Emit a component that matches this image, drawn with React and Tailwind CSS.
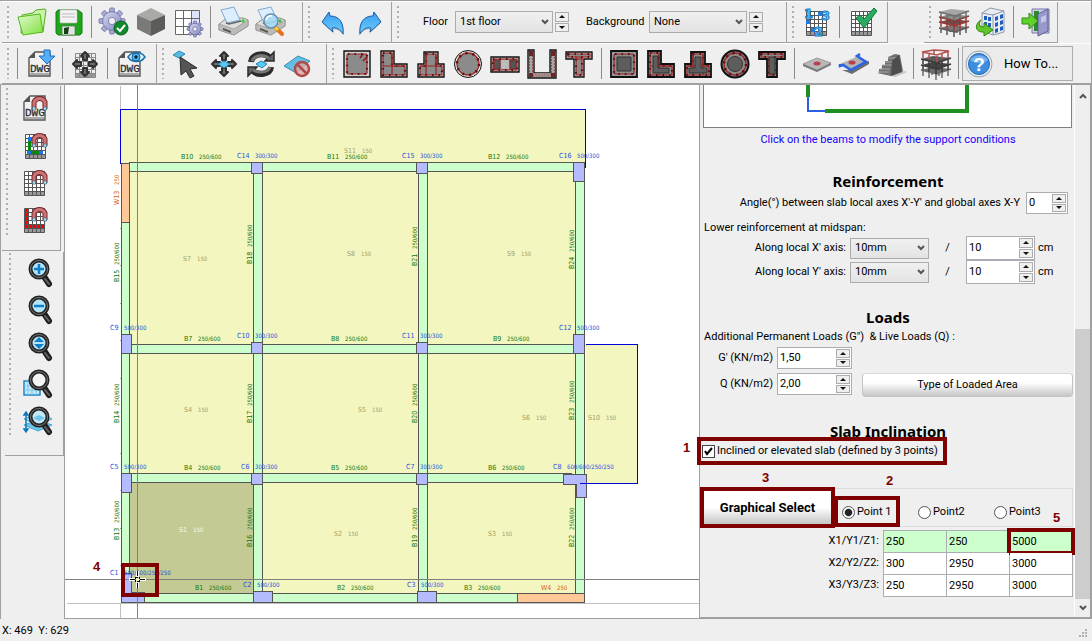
import React, { useState } from "react";

/* ---------- shared icon pieces ---------- */

function Icon({ children }) {
  return (
    <svg viewBox="0 0 32 32" className="size-8 overflow-visible" aria-hidden="true">
      {children}
    </svg>
  );
}

function Gear({ cx, cy, r, id }) {
  const teeth = [0, 45, 90, 135, 180, 225, 270, 315];
  return (
    <g transform={`translate(${cx} ${cy})`}>
      <defs>
        <linearGradient id={id} x1="0" y1="0" x2="1" y2="1">
          <stop offset="0" stopColor="#d6d8f2" />
          <stop offset="1" stopColor="#8587bd" />
        </linearGradient>
      </defs>
      {teeth.map((a) => (
        <rect key={a} x={-r * 0.18} y={-r} width={r * 0.36} height={r * 0.5} rx="1" fill="#a9abd6" stroke="#6b6da5" strokeWidth="0.8" transform={`rotate(${a})`} />
      ))}
      <circle r={r * 0.72} fill={`url(#${id})`} stroke="#6b6da5" strokeWidth="0.8" />
      <circle r={r * 0.28} fill="#efefef" stroke="#6b6da5" strokeWidth="0.8" />
    </g>
  );
}

function Grid({ x = 5, y = 5, n = 5, m = 6, s = 4, line = "#555", fill = "#fff" }) {
  const w = n * s;
  const h = m * s;
  const cols = Array.from({ length: n + 1 }, (_, i) => `M${x + i * s} ${y}v${h}`).join("");
  const rows = Array.from({ length: m + 1 }, (_, i) => `M${x} ${y + i * s}h${w}`).join("");
  return (
    <g>
      <rect x={x} y={y} width={w} height={h} fill={fill} />
      <rect x={x} y={y + h - s} width={w} height={s} fill="#999" />
      <path d={cols + rows} stroke={line} strokeWidth="1" fill="none" transform="translate(.5 .5)" />
    </g>
  );
}

const FolderIcon = () => (
  <Icon>
    <defs>
      <linearGradient id="fold" x1="0" y1="0" x2="1" y2="1">
        <stop offset="0" stopColor="#e2fbd0" />
        <stop offset="1" stopColor="#7fe03c" />
      </linearGradient>
    </defs>
    <path d="M5 27 6 9l11-2 3-3 9-1 1 1-3 22z" fill="#c9f5a6" stroke="#58a821" />
    <path d="M2 11 24 8l3 18-20 3z" fill="url(#fold)" stroke="#58b81e" />
  </Icon>
);

const SaveIcon = () => (
  <Icon>
    <path d="M5 4h20l4 3v20l-2 2H5l-2-2V6z" fill="#22a51c" stroke="#0f7d10" />
    <rect x="7" y="4" width="17" height="13" rx="1" fill="#f3f3f3" stroke="#bbb" strokeWidth=".6" />
    <path d="M9 8h13M9 11h13" stroke="#bbb" />
    <rect x="9" y="20" width="13" height="9" fill="#e3e3e3" stroke="#4b7a4b" strokeWidth=".7" />
    <path d="m11 22 5-1-1 7h-4z" fill="#173f17" />
  </Icon>
);

const GearCheckIcon = () => (
  <Icon>
    <Gear cx={14} cy={15} r={13} id="g1" />
    <circle cx="23" cy="22" r="7" fill="#10892f" stroke="#0a6321" />
    <path d="m19 22 3 3 5-6" fill="none" stroke="#fff" strokeWidth="2" />
  </Icon>
);

const CubeIcon = () => (
  <Icon>
    <path d="M16 2 30 9 16 15 2 9z" fill="#a9a9a7" />
    <path d="M2 9l14 6v15L2 23z" fill="#7a7a78" />
    <path d="M30 9 16 15v15l14-7z" fill="#5c5c5a" />
  </Icon>
);

const GridGearIcon = () => (
  <Icon>
    <rect x="3" y="4" width="24" height="24" fill="#fff" />
    <path d="M20 5h7v7h-7zM20 13h7v7h-7z" fill="#dfe2fb" />
    <path d="M3.500 4.500h24v24h-24zM11.500 4v24M19.500 4v24M3 12.500h24M3 20.500h24" fill="none" stroke="#666" />
    <Gear cx={23} cy={23} r={8} id="g2" />
  </Icon>
);

function PrinterBody() {
  return (
    <g>
      <path d="m2 18 8-6h16l5 2v6l-14 9-15-5z" fill="#dededc" stroke="#8d8d8b" />
      <path d="m4 4 13-3 6 13-13 3z" fill="#dceefd" stroke="#7eaad0" />
      <path d="M9 17l3 1 12-3" stroke="#666" strokeWidth="1.500" fill="none" />
      <path d="m2 18 15 5 14-9v6l-14 9-15-5z" fill="#bcbcba" stroke="#8d8d8b" strokeWidth=".6" />
      <path d="m6 22 8 3v2l-8-3z" fill="#555" />
      <circle cx="26" cy="15" r="1.7" fill="#33c933" />
    </g>
  );
}

const PrinterIcon = () => (
  <Icon>
    <PrinterBody />
  </Icon>
);

const PreviewIcon = () => (
  <Icon>
    <PrinterBody />
    <path d="m22 22 6 6" stroke="#e8711c" strokeWidth="4" strokeLinecap="round" />
    <path d="m21 21 3 3" stroke="#f7d33e" strokeWidth="3" />
    <circle cx="17" cy="15" r="7" fill="#a5d9f7" fillOpacity=".9" stroke="#6b8ea8" strokeWidth="1.5" />
    <path d="M12 14a5 5 0 0 1 6-4" stroke="#fff" strokeWidth="1.5" fill="none" />
  </Icon>
);

function BackArrow({ id }) {
  return (
    <g>
      <defs>
        <linearGradient id={id} x1="0" y1="0" x2="0" y2="1">
          <stop offset="0" stopColor="#3a9df0" />
          <stop offset="1" stopColor="#6bd0ff" />
        </linearGradient>
      </defs>
      <path d="M26 29c-3-5-7-7-11-6l1 4L5 17 12 7l1 4c9 0 14 6 13 18z" fill="#777" opacity=".35" transform="translate(1 1)" />
      <path d="M26 28c-3-5-7-7-11-6l1 4L5 16 12 6l1 4c9 0 14 6 13 18z" fill={`url(#${id})`} stroke="#1b5ea8" />
    </g>
  );
}

const UndoIcon = () => (
  <Icon>
    <BackArrow id="ua" />
  </Icon>
);

const RedoIcon = () => (
  <Icon>
    <g transform="matrix(-1 0 0 1 32 0)">
      <BackArrow id="ra" />
    </g>
  </Icon>
);

const NumberGridIcon = () => (
  <Icon>
    <Grid x={5} y={5} />
    <path d="M17 6h4v4h-4zM5 14h4v4H5zM10 22h4v4h-4z" fill="#1e7de0" />
    <g fontFamily="DejaVu Sans" fontWeight="bold" fontSize="13" fill="#6cc6f8" stroke="#1578c8" strokeWidth=".9">
      <text x="3" y="12">1</text>
      <text x="20" y="14">3</text>
      <text x="13" y="30">2</text>
    </g>
  </Icon>
);

const GridCheckIcon = () => (
  <Icon>
    <Grid x={5} y={5} />
    <path d="m10 12 4-3 4 4L28 2l3 3-13 17z" fill="#2bab62" stroke="#137a3d" />
  </Icon>
);

/* One storey of the concrete frame: columns under a thin slab plate */
function Storey({ y, fill, edge, legs = 5 }) {
  return (
    <g>
      <path d={`M3 ${y}v${legs}M9 ${y + 2}v${legs}M16 ${y + 4}v${legs}M22 ${y + 2}v${legs}M28 ${y}v${legs}M12 ${y - 1}v${legs}M19 ${y}v${legs}`} stroke={edge} strokeWidth="1.500" />
      <path d={`M1 ${y}l12-3 18 2-14 5z`} fill={fill} />
      <path d={`M1 ${y}l16 4 14-5`} fill="none" stroke={edge} strokeWidth="1.500" />
    </g>
  );
}

const BuildingRedIcon = () => (
  <Icon>
    <Storey y={22} fill="#777" edge="#5a5a5a" />
    <Storey y={16} fill="#6d4c4c" edge="#a13c3a" />
    <Storey y={11} fill="#8b8b8b" edge="#903634" />
    <Storey y={6} fill="#a5a5a5" edge="#6f6f6f" />
  </Icon>
);

const BuildingBlueIcon = () => (
  <Icon>
    <path d="m7 7 8-5 14 3v21l-11 3-11-4z" fill="#e7edf3" stroke="#8e99a5" />
    <path d="M18 8v21M7 7l11 2 11-4" stroke="#8e99a5" fill="none" />
    <path d="M9 10h3v4H9zM13 11h3v4h-3zM9 16h3v4H9zM13 17h3v4h-3zM20 11l3-1v4l-3 1zM25 9l3-1v4l-3 1zM20 17l3-1v4l-3 1zM25 15l3-1v4l-3 1zM20 23l3-1v4l-3 1zM25 21l3-1v4l-3 1z" fill="#1f5fc0" />
    <path d="M6 14c-3 4-2 7 3 7v-4l9 7-9 6v-4C0 27-1 18 6 14z" fill="#62c72c" stroke="#2f8410" />
  </Icon>
);

const ExitIcon = () => (
  <Icon>
    <path d="M12 3h17v24H12z" fill="#cfcfe4" stroke="#7577a8" />
    <path d="M14 5h5v20h-5z" fill="#2c8a2c" />
    <path d="m18 8 10-5v22l-10 5z" fill="#9899cc" stroke="#5f6196" />
    <path d="m21 11 5-2v6l-5 2z" fill="#c5c6ea" />
    <path d="M2 12h7V7l9 8-9 8v-5H2z" fill="#5fd32c" stroke="#2f8a12" />
  </Icon>
);

function DwgPage() {
  return (
    <g>
      <path d="M5 10l6-6h15v24H5z" fill="#f1f1f1" stroke="#555" strokeWidth="1.4" />
      <path d="m5 10 6-6v6z" fill="#555" />
      <path d="M6 25h19v2H6z" fill="#aaa" />
      <text x="6" y="24" fontFamily="Liberation Mono" fontSize="11" fill="#2d2d2d" stroke="#2d2d2d" strokeWidth=".3">DWG</text>
    </g>
  );
}

const DwgImportIcon = () => (
  <Icon>
    <DwgPage />
    <path d="M20 2h6v6h5l-8 8-8-8h5z" fill="#55aef7" stroke="#1f6fc2" />
  </Icon>
);

const DwgViewIcon = () => (
  <Icon>
    <DwgPage />
    <path d="M14 9c4-6 13-6 17 0-4 6-13 6-17 0z" fill="#d9efff" stroke="#1c6fa8" strokeWidth="1.5" />
    <circle cx="22" cy="9" r="4" fill="#4ab3ee" stroke="#1c5f94" />
    <circle cx="22" cy="9" r="1.7" fill="#123" />
  </Icon>
);

const DARK_ARROWS = "M16 4l4 4h-2v4h-4V8h-2zM16 28l4-4h-2v-4h-4v4h-2zM4 16l4-4v2h4v4H8v2zM28 16l-4-4v2h-4v4h4v2z";

const GridMoveIcon = () => (
  <Icon>
    <Grid x={6} y={5} fill="#eee" line="#888" />
    <path d={DARK_ARROWS} fill="#6c6c6c" stroke="#333" strokeWidth="2" strokeLinejoin="round" />
  </Icon>
);

const SelectIcon = () => (
  <Icon>
    <path d="m2 7 6-4 6 3-6 4z" fill="#58bbe0" stroke="#2c87b0" />
    <path d="M9 9 26 20l-7 1 4 7-4 2-4-7-5 4z" fill="#555" stroke="#2b2b2b" strokeLinejoin="round" />
  </Icon>
);

const MoveIcon = () => (
  <Icon>
    <path d={DARK_ARROWS} fill="#6c6c6c" stroke="#303030" strokeWidth="2" strokeLinejoin="round" />
    <path d="m10 16 6-3 6 3-6 4z" fill="#5cc8f5" stroke="#2387b5" />
  </Icon>
);

const RotateIcon = () => (
  <Icon>
    <path d="M6 14C7 6 19 4 24 9" fill="none" stroke="#2b2b2b" strokeWidth="6" />
    <path d="m20 13 9 0V4z" fill="#666" stroke="#2b2b2b" strokeWidth="1.500" />
    <path d="M7 13C9 7 18 6 24 10" fill="none" stroke="#777" strokeWidth="3" />
    <path d="M26 19c-1 8-13 9-18 4" fill="none" stroke="#2b2b2b" strokeWidth="6" />
    <path d="m12 19-9 0v9z" fill="#666" stroke="#2b2b2b" strokeWidth="1.500" />
    <path d="M25 19c-2 6-12 6-17 3" fill="none" stroke="#777" strokeWidth="3" />
    <path d="m11 16 5-3 6 3-5 4z" fill="#5cc8f5" stroke="#2387b5" />
  </Icon>
);

const DeleteSlabIcon = () => (
  <Icon>
    <path d="M2 18 16 8l12 5-14 12z" fill="#62bfe3" stroke="#3a8db0" />
    <circle cx="20" cy="21" r="7" fill="#d9a9a6" fillOpacity=".8" stroke="#b04a49" strokeWidth="2.5" />
    <path d="m15 16 10 10" stroke="#b04a49" strokeWidth="2.5" />
  </Icon>
);

/* ---------- concrete section icons ---------- */

const SECTION_SHAPES = {
  square: "M3 3h26v26H3z",
  ell: "M3 3h13v13h13v13H3z",
  tee: "M9 4h14v12h6v13H3V16h6z",
  flat: "M2 9h28v15H2z",
  channel: "M2 2h6v23h16V2h6v28H2z",
  beamT: "M3 4h26v7h-8v18H11V11H3z",
};
const STEEL = {
  square: "M7 6h18l1 1v18l-1 1H7l-1-1V7z",
  ell: "M5 5h9v13h13v9H5z",
  tee: "M11 6h10v12h6v9H5v-9h6z",
  flat: "M4 11h24v11H4z",
  beamT: "M5 6h22v3h-8v18h-6V9H5z",
};

function SectionIcon({ shape, jacket = false }) {
  if (shape === "round") {
    return (
      <Icon>
        <circle cx="16" cy="16" r="13.5" fill={jacket ? "#8a8a8a" : "#e4e4e4"} stroke="#111" strokeWidth={jacket ? 2 : 1} />
        <circle cx="16" cy="16" r="11" fill="#8b8b8b" stroke="#9b2a2a" strokeWidth="1.3" />
        <circle cx="16" cy="16" r="11" fill="none" stroke="#5f0d0d" strokeWidth="2.500" strokeDasharray="2 5" />
        {jacket && <circle cx="16" cy="16" r="7.500" fill="#5d5d5d" stroke="#333" />}
      </Icon>
    );
  }
  return (
    <Icon>
      <path d={SECTION_SHAPES[shape]} fill={jacket ? "#999" : "#d0d0d0"} stroke="#111" strokeWidth={jacket ? 1.8 : 1.4} />
      {shape === "channel" ? (
        <g>
          <path d="M5 4v23h22V4" fill="none" stroke="#a5a5a5" strokeWidth="4" />
          <path d="M3.500 4v24h25V4M6.500 4v22h19V4" fill="none" stroke="#9a3a3a" strokeWidth=".8" strokeDasharray="2 1" />
          <path d="M3 3h4v5H3zM25 3h4v5h-4zM3 25h4v4H3zM25 25h4v4h-4z" fill="#6a2424" />
        </g>
      ) : (
        <g>
          <path d={STEEL[shape]} fill="#8b8b8b" stroke="#9b2222" strokeWidth="1.2" />
          <path d={STEEL[shape]} fill="none" stroke="#5f0d0d" strokeWidth="2.200" strokeDasharray="1.500 5" />
        </g>
      )}
      {shape === "square" && !jacket && <path d="m19 10 3-4M22 13l4-4" stroke="#8e1515" strokeWidth="1.5" />}
      {shape === "ell" && <path d="M5 18h22M14 5v22" stroke="#9b2222" strokeWidth="1.2" />}
      {shape === "tee" && <path d="M5 18h22M11 6v21M21 6v21" stroke="#9b2222" strokeWidth="1.2" />}
      {shape === "flat" && <path d="M5 12h6v9H5zM21 12h6v9h-6z" fill="#555" stroke="#8a2222" />}
      {shape === "flat" && <path d="M12 12h8v9h-8z" fill="#bbb" />}
      {shape === "beamT" && !jacket && <path d="M12 9h8M12 11h8" stroke="#9b1c1c" />}
      {jacket && shape === "square" && <path d="M9 9h14v14H9z" fill="#5d5d5d" stroke="#333" />}
      {jacket && shape === "ell" && <path d="M8 8h5v12h11v5H8z" fill="#5d5d5d" stroke="#333" />}
      {jacket && shape === "tee" && <path d="M13 9h6v11h6v5H7v-5h6z" fill="#5d5d5d" stroke="#333" />}
      {jacket && shape === "beamT" && <path d="M13 9h6v17h-6z" fill="#5d5d5d" stroke="#333" />}
    </Icon>
  );
}

const SlabIcon = () => (
  <Icon>
    <path d="m2 16 14-6 14 5-14 7z" fill="#b8b8b8" stroke="#9a9a9a" />
    <path d="m2 16 14 6 14-7v2l-14 7-14-6z" fill="#777" />
    <ellipse cx="16" cy="15.500" rx="3.500" ry="2" fill="#b8414f" />
  </Icon>
);

const SlabBlueIcon = () => (
  <Icon>
    <path d="m4 22 10 4 17-10v-3L14 22z" fill="#6d6d6d" />
    <path d="m2 16 16-7 12 4-16 9z" fill="#b3b3b3" />
    <ellipse cx="14" cy="14.500" rx="3.500" ry="2" fill="#b8414f" />
    <path d="M2 16v2l3-1 8 5 15-8-9-6 3-2" fill="none" stroke="#2d63e6" strokeWidth="2.600" />
  </Icon>
);

const StairsIcon = () => (
  <Icon>
    <path d="m13 27 16-4 3 1-12 5z" fill="#c2c2c2" />
    <path d="M2 25h2v-4h3v-4h3v-4h3V9l7-3 5 1 3 16-12 5z" fill="#6f6f6f" />
    <path d="M3 24h11M5 21h10M8 17h9M10 14h9M13 10h9" stroke="#aaa" />
    <path d="m17 13 7-6 3 17-11 4z" fill="#4d4d4d" />
  </Icon>
);

const TowerIcon = () => (
  <Icon>
    <Storey y={22} fill="#6c6c6c" edge="#6c6c6c" legs={6} />
    <Storey y={17} fill="#454545" edge="#3a3a3a" />
    <Storey y={11} fill="#5a5a5a" edge="#3a3a3a" />
    <g fill="none" strokeWidth="1.500" stroke="#b0524e">
      <path d="M2 4 14 2l15 1-12 4zM3 5v5M9 6v5M17 8v6M28 4v6M22 6v5M14 2v5" />
    </g>
  </Icon>
);

/* ---------- snap and zoom icons ---------- */

function Magnet() {
  return (
    <g>
      <path d="M15 17V10a6 6 0 0 1 11 0v7" fill="none" stroke="#7d2425" strokeWidth="5" />
      <path d="M15 17V10a6 6 0 0 1 11 0v7" fill="none" stroke="#c97476" strokeWidth="3" />
      <path d="M13.500 15h3v3h-3zM24.500 15h3v3h-3z" fill="#b5def0" stroke="#4c6f80" strokeWidth=".8" />
    </g>
  );
}

const SnapDwgIcon = () => (
  <Icon>
    <DwgPage />
    <Magnet />
  </Icon>
);

const SnapBeamIcon = () => (
  <Icon>
    <Grid x={6} y={5} />
    <path d="M9 8h3v17H9zM9 22h15v3H9z" fill="#0a860a" />
    <path d="M9 8h4v4H9zM8 22h4v3H8zM20 22h4v3h-4z" fill="#1976f0" />
    <Magnet />
  </Icon>
);

const SnapGridIcon = () => (
  <Icon>
    <Grid x={5} y={5} />
    <Magnet />
  </Icon>
);

const SnapLineIcon = () => (
  <Icon>
    <Grid x={5} y={5} />
    <path d="M6 6h3v3H6zM6 10h3v3H6zM6 14h3v3H6zM6 18h3v3H6zM6 22h3v3H6zM10 22h3v3h-3zM14 22h3v3h-3zM18 22h3v3h-3zM22 22h3v3h-3z" fill="#f00" />
    <Magnet />
  </Icon>
);

function Lens({ fill = "#b5e3f7" }) {
  return (
    <g>
      <path d="m22 21 4 6" stroke="#1f1f1f" strokeWidth="6" strokeLinecap="round" />
      <path d="m22 22 4 5" stroke="#666" strokeWidth="2" strokeLinecap="round" />
      <circle cx="16" cy="12" r="8.500" fill={fill} stroke="#222" strokeWidth="4" />
      <circle cx="16" cy="12" r="8.500" fill="none" stroke="#777" strokeWidth="1" />
    </g>
  );
}

const ZoomInIcon = () => (
  <Icon>
    <Lens />
    <path d="M16 7v10M11 12h10" stroke="#0f80c8" strokeWidth="2.500" />
  </Icon>
);

const ZoomOutIcon = () => (
  <Icon>
    <Lens />
    <path d="M11 12h10" stroke="#0f80c8" strokeWidth="2.500" />
  </Icon>
);

const ZoomFitIcon = () => (
  <Icon>
    <Lens />
    <path d="m16 6 5 5H11zM16 18l5-5H11z" fill="#0f80c8" />
  </Icon>
);

const ZoomWindowIcon = () => (
  <Icon>
    <path d="M1 13h16v14H1z" fill="#c5e9fa" stroke="#1b87c9" strokeWidth="1.500" />
    <path d="M5 13v14M9 13v14M13 13v14M1 18h16M1 22h16" stroke="#7cc4e8" />
    <Lens fill="#f4f4f4" />
  </Icon>
);

const ZoomStoreyIcon = () => (
  <Icon>
    <path d="m1 14 14-6 14 6-14 6z" fill="#a5dcf3" stroke="#49a8d4" />
    <path d="m1 20 14-5 14 5-14 6z" fill="#6fc4ea" stroke="#49a8d4" />
    <path d="M3 8v18M1 10l2-3 2 3zM1 24l2 3 2-3z" stroke="#0f78bf" strokeWidth="1.500" fill="#0f78bf" />
    <Lens fill="#c3e9f8" />
    <path d="m10 13 6-3 6 3-6 3z" fill="#6fc4ea" />
  </Icon>
);

/* ---------- small controls ---------- */

function Tool({ label, children }) {
  return (
    <button type="button" aria-label={label} className="flex h-10 w-[37px] shrink-0 items-center justify-center">
      {children}
    </button>
  );
}

function Sep() {
  return (
    <div className="flex w-2 shrink-0 justify-center py-1">
      <div className="w-px bg-[#8c8c8c]" />
    </div>
  );
}

function Grip({ vertical = false }) {
  return vertical ? (
    <div className="w-[2px] self-stretch bg-[repeating-linear-gradient(to_bottom,#b0b0b0_0_2px,transparent_2px_5px)]" />
  ) : (
    <div className="flex w-[11px] shrink-0 justify-center py-1">
      <div className="w-[2px] bg-[repeating-linear-gradient(to_bottom,#b0b0b0_0_2px,transparent_2px_5px)]" />
    </div>
  );
}

function ToolGroup({ className = "", children }) {
  return (
    <div className={`flex shrink-0 items-stretch border-r border-b border-[#a0a0a0] ${className}`}>
      <Grip />
      {children}
    </div>
  );
}

function Chevron() {
  return (
    <svg viewBox="0 0 8 6" className="pointer-events-none absolute top-1/2 right-1 h-[6px] w-2 -translate-y-1/2" aria-hidden="true">
      <path d="M1 1l3 3 3-3" fill="none" stroke="#555" strokeWidth="2" />
    </svg>
  );
}

function Dropdown({ label, options, className }) {
  return (
    <div className={`relative shrink-0 ${className}`}>
      <select aria-label={label} className="block h-full w-full appearance-none border border-[#acacac] bg-linear-to-b from-[#f0f0f0] to-[#e3e3e3] pl-1 outline-none">
        {options.map((o) => (
          <option key={o}>{o}</option>
        ))}
      </select>
      <Chevron />
    </div>
  );
}

function SpinButtons({ label, onStep }) {
  return (
    <div className="flex w-[14px] shrink-0 flex-col gap-px">
      {[1, -1].map((step) => (
        <button
          key={step}
          type="button"
          aria-label={`${step > 0 ? "Increase" : "Decrease"} ${label}`}
          onClick={() => onStep && onStep(step)}
          className="flex min-h-0 flex-1 items-center justify-center border border-[#acacac] bg-[#efefef]"
        >
          <svg viewBox="0 0 6 3" className="h-[3px] w-[6px]" aria-hidden="true">
            <path d={step > 0 ? "M0 3 3 0l3 3z" : "M0 0h6L3 3z"} fill="#111" />
          </svg>
        </button>
      ))}
    </div>
  );
}

function Spin({ id, label, initial, decimals = 0, className }) {
  const [value, setValue] = useState(initial);
  const step = (d) => {
    const n = parseFloat(value.replace(",", ".")) || 0;
    setValue((n + d).toFixed(decimals).replace(".", ","));
  };
  return (
    <div className={`flex shrink-0 border border-[#abadb3] bg-white p-px ${className}`}>
      <input id={id} aria-label={label} value={value} onChange={(e) => setValue(e.target.value)} className="w-0 min-w-0 flex-1 bg-transparent pl-px outline-none" />
      <SpinButtons label={label} onStep={step} />
    </div>
  );
}

/* ---------- header ---------- */

const FLOORS = ["1st floor", "2nd floor", "3rd floor"];

function Header() {
  return (
    <header className="border-t border-r border-[#a0a0a0] bg-[#efefef] pl-[2px]">
      <div className="flex h-[42px] border-t border-white">
        <ToolGroup className="pr-[14px]">
          <Tool label="Open"><FolderIcon /></Tool>
          <Tool label="Save"><SaveIcon /></Tool>
          <Sep />
          <Tool label="Parameters"><GearCheckIcon /></Tool>
          <Tool label="Materials"><CubeIcon /></Tool>
          <Tool label="Grid settings"><GridGearIcon /></Tool>
          <Sep />
          <Tool label="Print"><PrinterIcon /></Tool>
          <Tool label="Print preview"><PreviewIcon /></Tool>
        </ToolGroup>
        <ToolGroup className="pr-[3px]">
          <Tool label="Undo"><UndoIcon /></Tool>
          <Tool label="Redo"><RedoIcon /></Tool>
        </ToolGroup>
        <ToolGroup className="pr-[23px]">
          <div className="flex items-center pl-5">
            <span className="w-8">Floor</span>
            <Dropdown label="Floor" options={FLOORS} className="mr-[2px] h-[22px] w-[98px]" />
            <div className="flex h-5"><SpinButtons label="floor" /></div>
            <span className="ml-[17px] w-[63px] shrink-0">Background</span>
            <Dropdown label="Background" options={["None", ...FLOORS]} className="mr-[2px] h-[22px] w-[98px]" />
            <div className="flex h-5"><SpinButtons label="background" /></div>
          </div>
        </ToolGroup>
        <ToolGroup className="mr-9 pr-[7px]">
          <Tool label="Renumber"><NumberGridIcon /></Tool>
          <Sep />
          <Tool label="Check"><GridCheckIcon /></Tool>
        </ToolGroup>
        <ToolGroup className="pr-[3px]">
          <Tool label="3D frame"><BuildingRedIcon /></Tool>
          <Tool label="Model"><BuildingBlueIcon /></Tool>
          <Sep />
          <Tool label="Exit"><ExitIcon /></Tool>
        </ToolGroup>
      </div>
      <div className="flex h-[41px] border-t border-white">
        <ToolGroup className="pr-2">
          <Sep />
          <Tool label="Import DWG"><DwgImportIcon /></Tool>
          <Sep />
          <Tool label="Move grid"><GridMoveIcon /></Tool>
          <Sep />
          <Tool label="View DWG"><DwgViewIcon /></Tool>
        </ToolGroup>
        <ToolGroup className="pr-[10px]">
          <Tool label="Select"><SelectIcon /></Tool>
          <Tool label="Move"><MoveIcon /></Tool>
          <Tool label="Rotate"><RotateIcon /></Tool>
          <Tool label="Delete"><DeleteSlabIcon /></Tool>
        </ToolGroup>
        <div className="flex min-w-0 flex-1 border-b border-[#a0a0a0]">
          <Grip />
          <Tool label="Rectangular column"><SectionIcon shape="square" /></Tool>
          <Tool label="L column"><SectionIcon shape="ell" /></Tool>
          <Tool label="T column"><SectionIcon shape="tee" /></Tool>
          <Tool label="Circular column"><SectionIcon shape="round" /></Tool>
          <Tool label="Wall"><SectionIcon shape="flat" /></Tool>
          <Tool label="Core wall"><SectionIcon shape="channel" /></Tool>
          <Tool label="Beam"><SectionIcon shape="beamT" /></Tool>
          <Sep />
          <Tool label="Jacketed column"><SectionIcon shape="square" jacket /></Tool>
          <Tool label="Jacketed L column"><SectionIcon shape="ell" jacket /></Tool>
          <Tool label="Jacketed T column"><SectionIcon shape="tee" jacket /></Tool>
          <Tool label="Jacketed circular column"><SectionIcon shape="round" jacket /></Tool>
          <Tool label="Jacketed beam"><SectionIcon shape="beamT" jacket /></Tool>
          <Sep />
          <Tool label="Slab"><SlabIcon /></Tool>
          <Tool label="Foundation slab"><SlabBlueIcon /></Tool>
          <Tool label="Stairs"><StairsIcon /></Tool>
          <Sep />
          <Tool label="Structure"><TowerIcon /></Tool>
          <Sep />
          <button type="button" className="my-[2px] flex w-[111px] shrink-0 items-center border border-[#adadad] bg-[#ebebeb] pl-[2px] text-[13px]">
            <svg viewBox="0 0 28 28" className="mr-[11px] size-7" aria-hidden="true">
              <circle cx="14" cy="14" r="13" fill="#e6eaee" stroke="#9aa3ab" />
              <circle cx="14" cy="14" r="10.500" fill="#3b8ee0" stroke="#2767b0" />
              <path d="M5 10a10 8 0 0 1 18 0c-5 4-13 4-18 0z" fill="#8cc2f5" opacity=".7" />
              <text x="14" y="21" textAnchor="middle" fontFamily="Liberation Sans" fontSize="19" fontWeight="bold" fill="#fff">?</text>
            </svg>
            How To...
          </button>
        </div>
      </div>
    </header>
  );
}

/* ---------- left bars ---------- */

function Sidebar() {
  return (
    <aside className="flex w-[65px] shrink-0 flex-col border-t border-r border-l border-[#a0a0a0] bg-[#efefef]">
      <div className="mt-px mr-[3px] ml-px flex border-r border-b border-[#a0a0a0] pt-[2px] pb-[15px] pl-1">
        <Grip vertical />
        <div className="flex flex-col gap-[5px] pl-[11px]">
          {[
            ["Snap to DWG", SnapDwgIcon],
            ["Snap to beams", SnapBeamIcon],
            ["Snap to grid", SnapGridIcon],
            ["Snap to lines", SnapLineIcon],
          ].map(([label, I]) => (
            <button key={label} type="button" aria-label={label} className="h-8 w-8 first:mt-1"><I /></button>
          ))}
        </div>
      </div>
      <div className="mt-px ml-1 flex border-r border-b border-[#a0a0a0] pt-px pb-[18px] pl-1">
        <Grip vertical />
        <div className="flex flex-col gap-[5px] pl-[12px]">
          {[
            ["Zoom in", ZoomInIcon],
            ["Zoom out", ZoomOutIcon],
            ["Zoom extents", ZoomFitIcon],
            ["Zoom window", ZoomWindowIcon],
            ["Zoom storey", ZoomStoreyIcon],
          ].map(([label, I]) => (
            <button key={label} type="button" aria-label={label} className="h-8 w-8 first:mt-1"><I /></button>
          ))}
        </div>
      </div>
    </aside>
  );
}

/* ---------- floor plan ---------- */

const BEAMS = [
  [129, 162, 450, 9], [129, 344, 450, 9], [121, 473, 450, 9], [121, 593, 396, 9],
];
const BEAMS_V = [
  [121, 222, 8, 380], [253, 162, 9, 440], [418, 162, 9, 440], [575, 162, 9, 440],
];
const COLUMNS = [
  [251, 162, 11, 11], [416, 162, 11, 11], [573, 162, 11, 19],
  [121, 334, 10, 19], [251, 342, 11, 11], [416, 342, 11, 11], [573, 334, 11, 19],
  [121, 473, 10, 19], [251, 473, 11, 11], [416, 473, 11, 11],
  [253, 591, 19, 11], [417, 591, 19, 11],
];
/* kind, name, x, baseline, size text, size x */
const LABELS = [
  ["b", "B10", 181, 159, "250/600", 199], ["c", "C14", 237, 158, "300/300", 255],
  ["s", "S11", 344, 153, "150", 362], ["b", "B11", 327, 159, "250/600", 345],
  ["c", "C15", 402, 158, "300/300", 420], ["b", "B12", 488, 159, "250/600", 506],
  ["c", "C16", 559, 158, "500/300", 577],
  ["s", "S7", 183, 261, "150", 197], ["s", "S8", 347, 256, "150", 361], ["s", "S9", 507, 256, "150", 521],
  ["c", "C9", 110, 330, "500/300", 124], ["b", "B7", 184, 341, "250/600", 198],
  ["c", "C10", 237, 338, "300/300", 255], ["b", "B8", 331, 341, "250/600", 345],
  ["c", "C11", 402, 338, "300/300", 420], ["b", "B9", 493, 341, "250/600", 507],
  ["c", "C12", 559, 330, "500/300", 577],
  ["s", "S4", 184, 412, "150", 198], ["s", "S5", 358, 412, "150", 372],
  ["s", "S6", 522, 420, "150", 536], ["s", "S10", 588, 420, "150", 606],
  ["c", "C5", 110, 469, "500/300", 124], ["b", "B4", 184, 470, "250/600", 198],
  ["c", "C6", 241, 469, "300/300", 255], ["b", "B5", 331, 470, "250/600", 345],
  ["c", "C7", 406, 469, "300/300", 420], ["b", "B6", 488, 470, "250/600", 502],
  ["c", "C8", 553, 469, "600/600/250/250", 567],
  ["x", "S1", 179, 532, "150", 193], ["s", "S2", 334, 536, "150", 348], ["s", "S3", 488, 536, "150", 502],
  ["c", "C1", 110, 575, "500/600/250/250", 124],
  ["b", "B1", 195, 590, "250/600", 209], ["c", "C2", 243, 587, "500/300", 257],
  ["b", "B2", 337, 590, "250/600", 351], ["c", "C3", 407, 587, "500/300", 421],
  ["b", "B3", 464, 590, "250/600", 478], ["w", "W4", 541, 590, "250", 557],
];
/* kind, name, baseline x, start y, size text, size start y */
const LABELS_V = [
  ["w", "W13", 119, 205, "250", 185],
  ["b", "B15", 119, 282, "250/600", 265], ["b", "B18", 252, 264, "250/600", 247],
  ["b", "B21", 417, 266, "250/600", 249], ["b", "B24", 574, 269, "250/600", 252],
  ["b", "B14", 119, 423, "250/600", 406], ["b", "B17", 252, 423, "250/600", 406],
  ["b", "B20", 417, 423, "250/600", 406], ["b", "B23", 574, 420, "250/600", 403],
  ["b", "B13", 119, 540, "250/600", 523], ["b", "B16", 252, 547, "250/600", 530],
  ["b", "B19", 417, 547, "250/600", 530], ["b", "B22", 574, 547, "250/600", 530],
];
const INK = { b: "#0f7a0f", c: "#1c50e0", s: "#a0a068", w: "#d95f14", x: "#fbfbe6" };

function Plan() {
  return (
    <section aria-label="Floor plan" className="flex min-w-0 flex-1 overflow-hidden border-t border-b border-[#a0a0a0] bg-white">
      <svg className="min-h-[533px] w-0 flex-1" role="img" aria-label="First floor plan">
        <g transform="translate(-65 -85)">
          <g shapeRendering="crispEdges">
            <g transform="translate(.5 .5)">
              <path d="M120 85v24M120 603v60M66 603h4000" stroke="#c0c0c0" fill="none" />
              <path d="M120 163v-54h465v54z" fill="#f4f6bf" />
              <path d="M585 344h52v139h-52z" fill="#f4f6bf" />
              <path d="M129 163h450v436H129z" fill="#f4f6bf" />
              <path d="M129 482h124v111H129z" fill="#c4ca93" />
              {[228, 265, 303, 340, 378, 453, 490, 528, 565].map((y) => (
                <path key={y} d={`M119 ${y}h2`} stroke="#aaa" />
              ))}
              <g fill="#ccffcc" stroke="#555">
                {BEAMS_V.map((r) => (
                  <rect key={r.join()} x={r[0]} y={r[1]} width={r[2]} height={r[3]} />
                ))}
                {BEAMS.map((r) => (
                  <rect key={r.join()} x={r[0]} y={r[1]} width={r[2]} height={r[3]} />
                ))}
              </g>
              <g fill="#ffc896" stroke="#555">
                <rect x="121" y="163" width="8" height="59" />
                <rect x="517" y="593" width="67" height="9" />
              </g>
              <g fill="#b4bbff" stroke="#555">
                {COLUMNS.map((r) => (
                  <rect key={r.join()} x={r[0]} y={r[1]} width={r[2]} height={r[3]} />
                ))}
                <path d="M563 474h23v23h-10v-13h-13z" />
                <path d="M121 573h10v19h13v10h-23z" />
              </g>
              <path d="M120 163v-54h465v58M585 344h52v139h-58" fill="none" stroke="#0000d8" />
            </g>
          </g>
          <g fontFamily="'DejaVu Sans Condensed', 'DejaVu Sans', sans-serif">
            {LABELS.map(([k, name, x, y, size, sx]) => (
              <g key={name} fill={INK[k]}>
                <text x={x} y={y} fontSize="7">{name}</text>
                <text x={sx} y={y} fontSize="6">{size}</text>
              </g>
            ))}
            {LABELS_V.map(([k, name, x, y, size, sy]) => (
              <g key={name} fill={INK[k]}>
                <text transform={`translate(${x} ${y}) rotate(-90)`} fontSize="7">{name}</text>
                <text transform={`translate(${x} ${sy}) rotate(-90)`} fontSize="6">{size}</text>
              </g>
            ))}
          </g>
          <g shapeRendering="crispEdges">
            <path d="M137.500 85v4000M60 579.500h4000" stroke="#808080" fill="none" />
            <rect x="123" y="565" width="34" height="30" fill="none" stroke="#7f0000" strokeWidth="4" />
            <path d="M137.500 571v6M137.500 582v6M129 579.500h6M140 579.500h6" stroke="#fff" strokeWidth="3" />
            <path d="M137.500 571v5M137.500 583v5M130 579.500h5M140 579.500h5" stroke="#000" />
            <rect x="135.500" y="577.500" width="4" height="4" fill="#f4f6bf" stroke="#000" strokeDasharray="2 1" />
          </g>
          <text x="93" y="571" fontFamily="Liberation Sans, sans-serif" fontWeight="bold" fontSize="13" fill="#7f0000">4</text>
        </g>
      </svg>
    </section>
  );
}

/* ---------- properties panel ---------- */

const MARK = "pointer-events-none absolute border-4 border-[#7f0000]";
const MARK_NO = "pointer-events-none absolute font-['Liberation_Sans',sans-serif] text-[13px]/4 font-bold text-[#7f0000]";

function Heading({ children, className = "" }) {
  return <h2 className={`text-center font-['Noto_Sans',sans-serif] text-[15px]/5 font-bold ${className}`}>{children}</h2>;
}

function AxisRow({ axis }) {
  return (
    <div className="flex h-6 items-center">
      <span className="w-[143px] text-right">Along local {axis}' axis:</span>
      <Dropdown label={`Bar diameter along ${axis}'`} options={["10mm", "8mm", "12mm", "14mm"]} className="ml-1 h-[21px] w-[79px]" />
      <span className="w-[37px] text-center">/</span>
      <Spin label={`Spacing along ${axis}'`} initial="10" className="h-6 w-[69px]" />
      <span className="pl-[3px]">cm</span>
    </div>
  );
}

function LoadRow({ id, label, initial, children }) {
  return (
    <div className="flex items-start">
      <label htmlFor={id} className="w-[70px] pt-[3px] text-right">{label}</label>
      <Spin id={id} label={label} initial={initial} decimals={2} className="ml-1 h-[22px] w-[75px]" />
      {children}
    </div>
  );
}

const ROWS = [
  ["X1/Y1/Z1:", ["250", "250", "5000"]],
  ["X2/Y2/Z2:", ["300", "2950", "3000"]],
  ["X3/Y3/Z3:", ["250", "2950", "3000"]],
];

function Panel() {
  const [point, setPoint] = useState(0);
  return (
    <aside className="flex w-[393px] shrink-0 border-t border-r-2 border-b-2 border-l border-[#a0a0a0] bg-[#efefef]">
      <div id="properties" className="min-w-0 flex-1 pr-px pl-[3px]">
        <div className="mr-px h-[43px] border-r border-b border-l border-[#808080] bg-white">
          <svg viewBox="0 0 366 42" className="h-[42px] w-full" shapeRendering="crispEdges" aria-hidden="true">
            <path d="M103 9v17h19" stroke="#2a5fe8" strokeWidth="2" fill="none" />
            <path d="M103 0v12M120 26h142V0" stroke="#1f8f1f" strokeWidth="4" fill="none" />
          </svg>
        </div>
        <p className="h-6 text-center leading-6 text-[#1400ff]">Click on the beams to modify the support conditions</p>

        <Heading className="mt-[19px]">Reinforcement</Heading>
        <div className="flex h-6 items-center justify-end pr-[5px]">
          <label htmlFor="angle">Angle(°) between slab local axes X'-Y' and global axes X-Y</label>
          <Spin id="angle" label="Angle" initial="0" className="ml-[6px] h-[22px] w-[42px]" />
        </div>
        <p className="mt-[5px] pl-px leading-4">Lower reinforcement at midspan:</p>
        <AxisRow axis="X" />
        <AxisRow axis="Y" />

        <Heading className="mt-[23px]">Loads</Heading>
        <p className="pl-px leading-5 whitespace-pre">Additional Permanent Loads (G")  & Live Loads (Q) :</p>
        <LoadRow id="g" label="G' (KN/m2)" initial="1,50" />
        <div className="mt-1">
          <LoadRow id="q" label="Q (KN/m2)" initial="2,00">
            <button type="button" className="ml-[10px] h-6 flex-1 rounded-sm border border-[#c4c4c4] border-t-[#d8d8d8] bg-linear-to-b from-white from-40% to-[#c6c6c6]">
              Type of Loaded Area
            </button>
          </LoadRow>
        </div>

        <Heading className="mt-6">Slab Inclination</Heading>
        <div className="relative flex h-5 items-center">
          <input id="inclined" type="checkbox" defaultChecked className="peer -ml-px size-[13px] appearance-none border border-[#444] bg-white" />
          <svg viewBox="0 0 13 13" className="pointer-events-none -ml-[13px] size-[13px] opacity-0 peer-checked:opacity-100" aria-hidden="true">
            <path d="m3 6 2 3 5-6" fill="none" stroke="#000" strokeWidth="2" />
          </svg>
          <label htmlFor="inclined" className="pl-[2px]">Inclined or elevated slab (defined by 3 points)</label>
          <span className={`${MARK} -top-1 -left-[6px] h-7 w-[250px]`} />
          <span className={`${MARK_NO} -top-px -left-5`}>1</span>
        </div>

        <div className="relative mt-[27px] flex h-[39px] border border-[#dcdcdc] border-l-transparent">
          <button type="button" className="-my-[2px] -ml-[4px] w-[135px] shrink-0 border-4 border-[#7f0000] bg-linear-to-b from-white from-50% to-[#c6c6c6] text-[13px] font-bold">
            Graphical Select
          </button>
          <div role="radiogroup" aria-label="Point" className="flex items-end pb-[6px]">
            {["Point 1", "Point2", "Point3"].map((p, i) => (
              <label key={p} className="flex h-4 w-[76px] items-center gap-[2px] pl-[7px]">
                <input
                  type="radio"
                  name="point"
                  checked={point === i}
                  onChange={() => setPoint(i)}
                  className="size-[13px] appearance-none rounded-full border border-[#555] bg-white checked:bg-radial checked:from-[#222] checked:from-40% checked:to-white checked:to-55%"
                />
                {p}
              </label>
            ))}
          </div>
          <span className={`${MARK} top-[7px] left-[130px] h-[31px] w-[66px]`} />
          <span className={`${MARK_NO} -top-[19px] left-[58px]`}>3</span>
          <span className={`${MARK_NO} -top-4 left-[182px]`}>2</span>
          <span className={`${MARK_NO} top-[21px] left-[349px]`}>5</span>
        </div>

        <table className="mt-[3px] ml-auto border-collapse">
          <tbody>
            {ROWS.map(([name, cells], r) => (
              <tr key={name} className="h-[22px]">
                <th scope="row" className="pr-1 text-right font-normal">{name}</th>
                {cells.map((v, c) => (
                  <td key={c} className="relative border border-[#abadb3] p-0">
                    <input
                      aria-label={`${name} ${"XYZ"[c]}`}
                      defaultValue={v}
                      className={`block h-[21px] w-[62px] pl-[2px] outline-none ${r === point ? "bg-[#ccffcc]" : "bg-white"}`}
                    />
                    {r === 0 && c === 2 && <span className={`${MARK} -inset-[3px]`} />}
                  </td>
                ))}
              </tr>
            ))}
          </tbody>
        </table>
      </div>

      <div role="scrollbar" aria-controls="properties" aria-valuenow={100} aria-orientation="vertical" className="flex w-4 shrink-0 flex-col items-center border-l border-white">
        <svg viewBox="0 0 8 6" className="mt-2 h-[6px] w-2" aria-hidden="true">
          <path d="m1 5 3-3 3 3" fill="none" stroke="#555" strokeWidth="2" />
        </svg>
        <div className="flex-[230]" />
        <div className="w-full flex-[271] bg-[#cdcdcd]" />
        <svg viewBox="0 0 8 6" className="my-[6px] h-[6px] w-2" aria-hidden="true">
          <path d="m1 1 3 3 3-3" fill="none" stroke="#555" strokeWidth="2" />
        </svg>
      </div>
    </aside>
  );
}

export default function App() {
  return (
    <div className="flex min-h-screen flex-col bg-[#efefef] font-[Roboto,'Liberation_Sans',sans-serif] text-[11px] text-black">
      <Header />
      <main className="flex flex-1">
        <Sidebar />
        <Plan />
        <Panel />
      </main>
      <footer className="flex h-[22px] items-center justify-between pt-[2px] pl-[2px]">
        <span>X: 469&nbsp; Y: 629</span>
        <svg viewBox="0 0 9 9" className="mt-1 mr-1 size-[9px]" aria-hidden="true">
          <path d="M6 0h2v2H6zM3 3h2v2H3zM6 3h2v2H6zM0 6h2v2H0zM3 6h2v2H3zM6 6h2v2H6z" fill="#b0b0b0" />
        </svg>
      </footer>
    </div>
  );
}
